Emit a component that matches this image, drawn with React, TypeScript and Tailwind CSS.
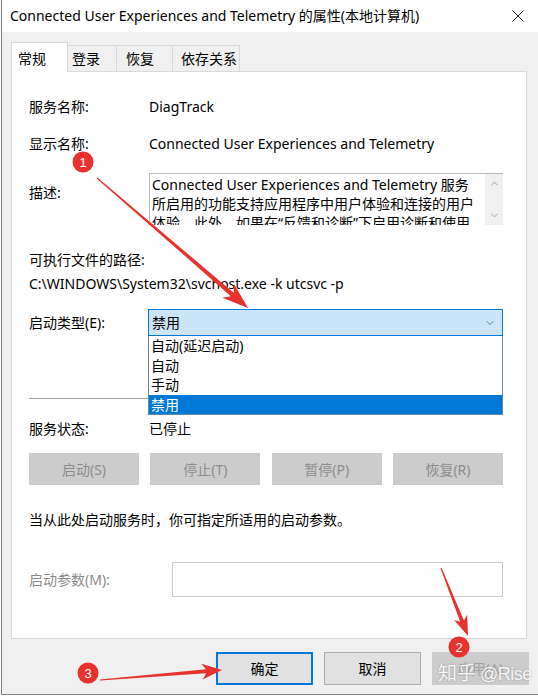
import { ChevronDown, ChevronUp } from "lucide-react";

type Pt = [number, number];

// tapered red annotation arrow, thin at the tail and wide at the head
function arrowPoints(tail: Pt, tip: Pt, neckW: number, headW: number, headL: number) {
    const [x1, y1] = tail;
    const [x2, y2] = tip;
    const len = Math.hypot(x2 - x1, y2 - y1);
    const ux = (x2 - x1) / len;
    const uy = (y2 - y1) / len;
    const nx = -uy;
    const ny = ux;
    const bx = x2 - ux * headL;
    const by = y2 - uy * headL;
    const cx = x2 - ux * headL * 0.8;
    const cy = y2 - uy * headL * 0.8;
    const pts: Pt[] = [
        [x1 + nx * 0.6, y1 + ny * 0.6],
        [cx + nx * (neckW / 2), cy + ny * (neckW / 2)],
        [bx + nx * (headW / 2), by + ny * (headW / 2)],
        [x2, y2],
        [bx - nx * (headW / 2), by - ny * (headW / 2)],
        [cx - nx * (neckW / 2), cy - ny * (neckW / 2)],
        [x1 - nx * 0.6, y1 - ny * 0.6],
    ];
    return pts.map((p) => p.join(",")).join(" ");
}

function Badge({ x, y, n }: { x: number; y: number; n: string }) {
    return (
        <g>
            <circle cx={x} cy={y} r={10.5} fill="#e8322d" />
            <text x={x} y={y + 4.5} textAnchor="middle" fontSize="13" fill="#ffffff" fontFamily="Liberation Sans, sans-serif">
                {n}
            </text>
        </g>
    );
}

function Tab({ label, active, w, pl }: { label: string; active?: boolean; w: string; pl: string }) {
    if (active) {
        return (
            <div className={`relative z-10 -mb-px h-[30px] ${w} ${pl} pt-[5px] whitespace-nowrap bg-white border border-b-0 border-[#d9d9d9]`}>
                {label}
            </div>
        );
    }
    return (
        <div className={`h-[26px] ${w} ${pl} pt-[2px] whitespace-nowrap bg-[#f0f0f0] border border-l-0 border-b-0 border-[#d9d9d9]`}>{label}</div>
    );
}

function Disabled({ label }: { label: string }) {
    return <div className="w-[110px] h-[32px] flex items-center justify-center bg-[#cccccc] text-[#8c8c8c]">{label}</div>;
}

export default function App() {
    return (
        <div className="relative w-[538px] h-[699px] overflow-hidden bg-white text-[14px] text-black font-['Noto_Sans','Noto_Sans_CJK_SC',sans-serif]">
            <div className="ml-px h-[695px] flex flex-col border-l border-b border-[#7d7d7d]">
                {/* title bar */}
                <div className="h-[32px] flex items-center justify-between bg-white pl-[8px] pr-[14px]">
                    <span className="leading-none">Connected User Experiences and Telemetry 的属性(本地计算机)</span>
                    <svg width="12" height="12" viewBox="0 0 12 12" className="text-[#222]">
                        <path d="M0.5 0.5 L11.5 11.5 M11.5 0.5 L0.5 11.5" stroke="currentColor" strokeWidth="1" />
                    </svg>
                </div>

                <div className="flex-1 flex flex-col bg-[#f0f0f0]">
                    {/* tabs */}
                    <div className="ml-[9px] mt-[10px] flex items-end">
                        <Tab label="常规" active w="w-[57px]" pl="pl-[6px]" />
                        <Tab label="登录" w="w-[49px]" pl="pl-[4px]" />
                        <Tab label="恢复" w="w-[56px]" pl="pl-[9px]" />
                        <Tab label="依存关系" w="w-[67px]" pl="pl-[8px]" />
                    </div>

                    {/* tab page */}
                    <div className="ml-[9px] w-[516px] h-[568px] bg-white border border-[#d9d9d9] pl-[17px] pr-[23px] pt-[24px]">
                        <div className="h-[20px] flex items-center">
                            <div className="w-[120px]">服务名称:</div>
                            <div>DiagTrack</div>
                        </div>
                        <div className="mt-[17px] h-[20px] flex items-center">
                            <div className="w-[120px]">显示名称:</div>
                            <div>Connected User Experiences and Telemetry</div>
                        </div>
                        <div className="mt-[20px] h-[52px] flex">
                            <div className="w-[120px] pt-[9px]">描述:</div>
                            <div className="flex-1 flex overflow-hidden border border-[#b8b8b8] border-r-0 border-b-0">
                                <div className="flex-1 pl-[2px] pt-px leading-[19px] overflow-hidden whitespace-nowrap">
                                    <div>Connected User Experiences and Telemetry 服务</div>
                                    <div>所启用的功能支持应用程序中用户体验和连接的用户</div>
                                    <div>体验。此外，如果在“反馈和诊断”下启用诊断和使用</div>
                                </div>
                                <div className="w-[18px] flex flex-col justify-between items-center bg-[#f0f0f0] py-[4px] text-[#7a7a7a]">
                                    <ChevronUp size={11} strokeWidth={1.5} />
                                    <ChevronDown size={11} strokeWidth={1.5} />
                                </div>
                            </div>
                        </div>
                        <div className="mt-[24px] h-[20px] flex items-center">可执行文件的路径:</div>
                        <div className="mt-[4px] h-[20px] flex items-center">C:\WINDOWS\System32\svchost.exe -k utcsvc -p</div>
                        <div className="mt-[16px] h-[27px] flex items-center">
                            <div className="w-[119px]">启动类型(E):</div>
                            <div className="relative flex-1 h-full">
                                <div className="h-full flex items-center justify-between pl-[3px] pr-[6px] bg-[#cce4f7] border border-[#0078d7]">
                                    <span>禁用</span>
                                    <ChevronDown size={12} strokeWidth={1.5} className="text-[#5a5a5a]" />
                                </div>
                                <div className="absolute left-0 top-full w-full z-10 bg-white border border-t-0 border-[#6f86a3] leading-[19.5px]">
                                    <div className="pl-[2px]">自动(延迟启动)</div>
                                    <div className="pl-[2px]">自动</div>
                                    <div className="pl-[2px]">手动</div>
                                    <div className="pl-[2px] bg-[#0078d7] text-white">禁用</div>
                                </div>
                            </div>
                        </div>
                        <div className="mt-[62px] border-t border-[#a0a0a0]" />
                        <div className="mt-[19px] h-[20px] flex items-center">
                            <div className="w-[120px]">服务状态:</div>
                            <div>已停止</div>
                        </div>
                        <div className="mt-[15px] flex justify-between">
                            <Disabled label="启动(S)" />
                            <Disabled label="停止(T)" />
                            <Disabled label="暂停(P)" />
                            <Disabled label="恢复(R)" />
                        </div>
                        <div className="mt-[24px] h-[20px] flex items-center">当从此处启动服务时，你可指定所适用的启动参数。</div>
                        <div className="mt-[33px] h-[35px] flex items-center">
                            <div className="w-[143px] text-[#8c8c8c]">启动参数(M):</div>
                            <div className="flex-1 h-full bg-white border border-[#cccccc]" />
                        </div>
                    </div>

                    {/* dialog buttons */}
                    <div className="mt-[13px] flex justify-end gap-[11px] pr-[9px]">
                        <div className="w-[97px] h-[33px] flex items-center justify-center bg-[#e1e1e1] border-2 border-[#0078d7]">确定</div>
                        <div className="w-[97px] h-[33px] flex items-center justify-center bg-[#e1e1e1] border border-[#adadad]">取消</div>
                        <div className="w-[97px] h-[33px] flex items-center justify-center bg-[#cccccc] text-[#a3a3a3]">应用(A)</div>
                    </div>
                </div>
            </div>

            {/* watermark */}
            <div className="absolute left-[438px] top-[659px] flex items-baseline gap-[4px] whitespace-nowrap leading-[28px] text-white/90 [text-shadow:0_0_2px_rgba(0,0,0,0.3)]">
                <span className="text-[19px]">知乎</span>
                <span className="text-[18px] tracking-[-0.5px] font-['Liberation_Sans',sans-serif]">@Rise</span>
            </div>

            {/* annotations */}
            <svg className="absolute inset-0 pointer-events-none" width="538" height="699">
                <polygon points={arrowPoints([97, 178], [248, 308], 4.5, 18, 26)} fill="#e8322d" />
                <polygon points={arrowPoints([441, 568], [468, 636], 4, 14, 20)} fill="#e8322d" />
                <polygon points={arrowPoints([100, 680], [222, 670], 4, 16, 20)} fill="#e8322d" />
                <Badge x={83} y={162} n="1" />
                <Badge x={459} y={647} n="2" />
                <Badge x={88} y={673} n="3" />
            </svg>
        </div>
    );
}
